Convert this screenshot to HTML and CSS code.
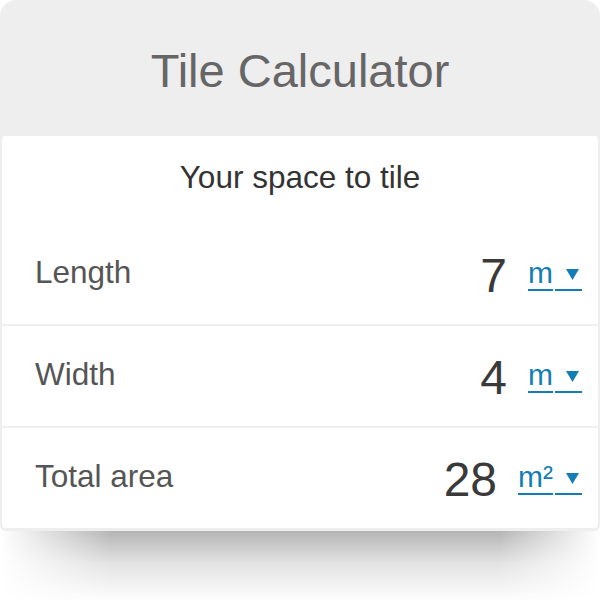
FILE: index.html
```html
<!DOCTYPE html>
<html lang="en">
<head>
    <meta charset="utf-8"/>
    <meta name="viewport" content="width=device-width, initial-scale=1.0">
    <title>Tile Calculator</title>
    <link rel="stylesheet" href="styles.css">
</head>
<body>
    <div class="calculator">
        <div class="calc-header">
            <h1>Tile Calculator</h1>
        </div>

        <div class="calc-body">
            <h2 class="section-title">Your space to tile</h2>

            <div class="calc-row">
                <span class="row-label">Length</span>
                <span class="row-value">7</span>
                <a class="unit-select" href="#">
                    <span class="unit-name">m</span>
                    <span class="unit-caret"><svg width="12" height="10" viewBox="0 0 12 10"><path d="M0 0H12L6 10Z" fill="#137db6"/></svg></span>
                </a>
            </div>

            <div class="calc-row">
                <span class="row-label">Width</span>
                <span class="row-value">4</span>
                <a class="unit-select" href="#">
                    <span class="unit-name">m</span>
                    <span class="unit-caret"><svg width="12" height="10" viewBox="0 0 12 10"><path d="M0 0H12L6 10Z" fill="#137db6"/></svg></span>
                </a>
            </div>

            <div class="calc-row">
                <span class="row-label">Total area</span>
                <span class="row-value">28</span>
                <a class="unit-select" href="#">
                    <span class="unit-name">m²</span>
                    <span class="unit-caret"><svg width="12" height="10" viewBox="0 0 12 10"><path d="M0 0H12L6 10Z" fill="#137db6"/></svg></span>
                </a>
            </div>
        </div>
    </div>
</body>
</html>
```

FILE: styles.css
```css
body {
    font-family: 'Liberation Sans', Arial, Helvetica, sans-serif;
    background-color: #ffffff;
    margin: 0;
    padding: 0;
    min-height: 600px;
}

.calculator {
    position: relative;
    width: 600px;
    background-color: #eeeeee;
    border-radius: 16px 16px 6px 6px;
    padding: 0 2px 3px;
    box-sizing: border-box;
}

/* soft shadow under the card */
.calculator::after {
    content: '';
    position: absolute;
    left: 0;
    right: 0;
    top: 100%;
    height: 72px;
    background: linear-gradient(to bottom, rgba(0, 0, 0, 0.29), rgba(0, 0, 0, 0.11) 45%, rgba(0, 0, 0, 0));
    -webkit-mask-image: linear-gradient(to right, transparent, #000 110px, #000 500px, transparent);
    mask-image: linear-gradient(to right, transparent, #000 110px, #000 500px, transparent);
}

.calc-header {
    height: 136px;
    display: flex;
    align-items: center;
    justify-content: center;
}

.calc-header h1 {
    margin: 0;
    font-size: 47px;
    font-weight: normal;
    color: #666666;
    padding-top: 4px;
}

.calc-body {
    background-color: #ffffff;
    border-radius: 4px;
}

.section-title {
    margin: 0;
    height: 88px;
    box-sizing: border-box;
    padding-top: 23px;
    line-height: 36px;
    text-align: center;
    font-size: 31.5px;
    font-weight: normal;
    color: #333333;
}

.calc-row {
    display: flex;
    align-items: center;
    height: 100px;
    padding: 0 16px 0 33px;
}

.calc-row + .calc-row {
    border-top: 2px solid #f0f0f0;
}

.row-label {
    flex: 1;
    font-size: 31.5px;
    color: #555555;
    padding-bottom: 4px;
}

.row-value {
    font-size: 48px;
    color: #3a3a3a;
    margin-right: 21px;
    padding-top: 2px;
}

.unit-select {
    display: flex;
    align-items: flex-end;
    text-decoration: none;
    color: #137db6;
}

.unit-name {
    font-size: 30px;
    line-height: 32px;
    border-bottom: 2px solid #137db6;
}

.unit-caret {
    margin-left: 2px;
    width: 27px;
    height: 32px;
    box-sizing: border-box;
    padding: 10px 2px 0 11px;
    border-bottom: 2px solid #137db6;
}

.unit-caret svg {
    display: block;
    width: 13px;
    height: 11px;
}
```
